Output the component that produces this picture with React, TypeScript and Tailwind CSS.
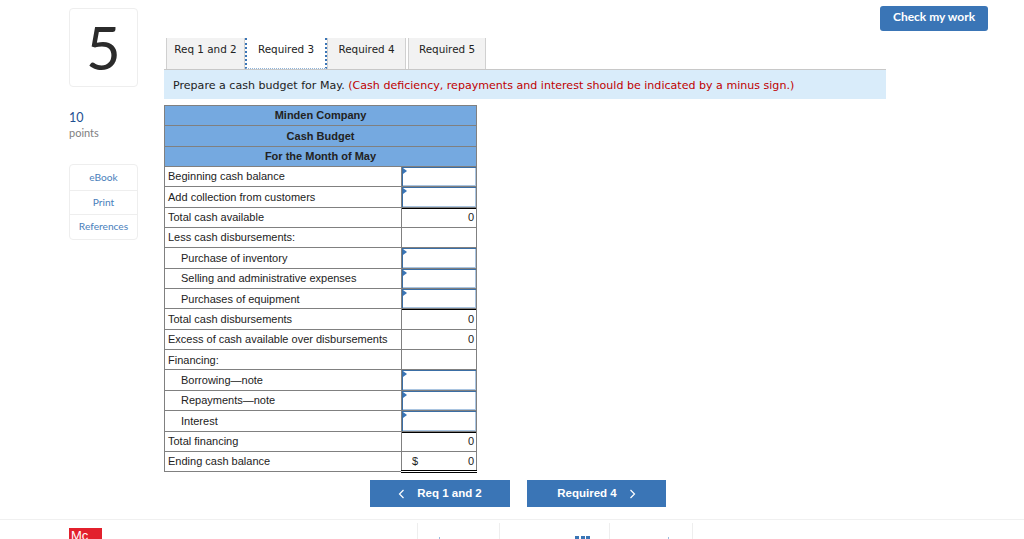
import React from "react";

const head = ["Minden Company", "Cash Budget", "For the Month of May"];

type Row = { label: string; indent?: boolean; kind: "input" | "value" | "blank" | "total"; value?: string; dollar?: boolean; strong?: boolean };

const rows: Row[] = [
  { label: "Beginning cash balance", kind: "input" },
  { label: "Add collection from customers", kind: "input" },
  { label: "Total cash available", kind: "value", value: "0", strong: true },
  { label: "Less cash disbursements:", kind: "blank" },
  { label: "Purchase of inventory", indent: true, kind: "input" },
  { label: "Selling and administrative expenses", indent: true, kind: "input" },
  { label: "Purchases of equipment", indent: true, kind: "input" },
  { label: "Total cash disbursements", kind: "value", value: "0", strong: true },
  { label: "Excess of cash available over disbursements", kind: "value", value: "0" },
  { label: "Financing:", kind: "blank" },
  { label: "Borrowing—note", indent: true, kind: "input" },
  { label: "Repayments—note", indent: true, kind: "input" },
  { label: "Interest", indent: true, kind: "input" },
  { label: "Total financing", kind: "value", value: "0", strong: true },
  { label: "Ending cash balance", kind: "total", value: "0", dollar: true },
];

function Tab({ label }: { label: string }) {
  return (
    <div className="flex h-full w-full items-center justify-center border-x border-[#d0d0d0] bg-[#f2f2f2] pb-[7px]">
      {label}
    </div>
  );
}

export default function App() {
  return (
    <div className="flex h-[539px] w-[1024px] flex-col overflow-hidden bg-white font-['Liberation_Sans',sans-serif]">
      <div className="flex h-[519px] pl-[69px]">
        <aside className="w-[69px] shrink-0 pt-[8px] font-['Lato',sans-serif]">
          <div className="flex h-[79px] items-center justify-center rounded border border-[#eeeeee] pb-[2px] text-[60px] leading-none font-normal text-[#2b2b2b]">
            5
          </div>
          <div className="mt-[23px] text-[12.5px] leading-[16px] text-[#1d4f91]">10</div>
          <div className="text-[11px] leading-[14px] text-[#808080]">points</div>
          <div className="mt-[24px] flex flex-col rounded border border-[#eeeeee] text-center text-[10.2px] text-[#4a80bb]">
            <div className="flex h-[26px] items-center justify-center border-b border-[#eeeeee]">eBook</div>
            <div className="flex h-[24px] items-center justify-center border-b border-[#eeeeee] pt-[1px]">Print</div>
            <div className="flex h-[24px] items-center justify-center">References</div>
          </div>
        </aside>

        <main className="ml-[26px] flex w-[824px] shrink-0 flex-col pt-[6px]">
          <button className="h-[25px] w-[108px] self-end rounded-[3px] bg-[#3a75b6] pb-[3px] font-['Lato',sans-serif] text-[12px] font-bold text-white">
            Check my work
          </button>

          <div className="mt-[7px] flex h-[31px] pl-[2px] font-['DejaVu_Sans',sans-serif] text-[10.4px] text-[#222222]">
            <div className="w-[79px]"><Tab label="Req 1 and 2" /></div>
            <div className="flex w-[82px] items-center justify-center border-x-2 border-b border-dotted border-x-[#3a75b6] border-b-[#8fb4da] bg-white pb-[7px]">
              Required 3
            </div>
            <div className="w-[79px]"><Tab label="Required 4" /></div>
            <div className="ml-[2px] w-[78px]"><Tab label="Required 5" /></div>
          </div>

          <div className="flex h-[30px] w-[722px] items-center border-t border-[#c8c8c8] bg-[#d9ecfa] pt-[3px] pl-[9px] font-['DejaVu_Sans',sans-serif] text-[11.07px] text-[#222222]">
            <span>Prepare a cash budget for May.&nbsp;</span>
            <span className="text-[#c00000]">(Cash deficiency, repayments and interest should be indicated by a minus sign.)</span>
          </div>

          <table className="mt-[6px] w-[312px] table-fixed border-collapse text-[11px] text-[#222222]">
            <colgroup>
              <col className="w-[237px]" />
              <col className="w-[75px]" />
            </colgroup>
            <thead>
              {head.map((h) => (
                <tr key={h} className="h-[20.35px]">
                  <th colSpan={2} className="border border-[#808080] bg-[#75a9e0] p-0 text-center font-bold">
                    {h}
                  </th>
                </tr>
              ))}
            </thead>
            <tbody>
              {rows.map((r) => (
                <tr key={r.label} className="h-[20.35px]">
                  <td className={`border border-[#808080] p-0 ${r.indent ? "pl-[16px]" : "pl-[3px]"}`}>{r.label}</td>
                  {r.kind === "input" ? (
                    <td className="relative border border-[#808080] bg-white p-0 shadow-[inset_1px_1px_0_#3a6ea5,inset_-1px_-1px_0_#a9c4e0]">
                      <span className="absolute top-[1px] left-[1px] h-0 w-0 border-y-[3px] border-l-[4px] border-y-transparent border-l-[#3a75b6]" />
                    </td>
                  ) : r.kind === "blank" ? (
                    <td className="border border-[#808080] p-0" />
                  ) : r.kind === "total" ? (
                    <td className="border border-b-[3px] border-[#808080] border-b-black border-double p-0 pr-[2px] text-right">
                      <div className="flex justify-between pl-[10px]">
                        <span>$</span>
                        <span>{r.value}</span>
                      </div>
                    </td>
                  ) : (
                    <td className={`border border-[#808080] p-0 pr-[2px] text-right ${r.strong ? "shadow-[inset_0_1px_0_#000000]" : ""}`}>{r.value}</td>
                  )}
                </tr>
              ))}
            </tbody>
          </table>

          <div className="mt-[7px] flex gap-[17px] pl-[206px] text-[11.5px] font-bold text-white">
            <div className="flex h-[27px] w-[140px] items-center justify-center gap-[12px] bg-[#3a75b6]">
              <svg width="7" height="10" viewBox="0 0 7 10" fill="none" stroke="white" strokeWidth="1.2"><path d="M5.5 1 1.5 5l4 4" /></svg>
              <span>Req 1 and 2</span>
            </div>
            <div className="flex h-[27px] w-[139px] items-center justify-center gap-[12px] bg-[#3a75b6]">
              <span>Required 4</span>
              <svg width="7" height="10" viewBox="0 0 7 10" fill="none" stroke="white" strokeWidth="1.2"><path d="M1.5 1 5.5 5l-4 4" /></svg>
            </div>
          </div>
        </main>
      </div>

      <footer className="flex h-[20px] items-start border-t border-[#f0f0f0]">
        <div className="mt-[8px] ml-[69px] h-[12px] w-[33px] bg-[#e2202c] pt-[1px] pl-[2px] text-[13px] leading-[14px] text-white">
          Mc
        </div>
        <div className="mt-[3px] ml-[315px] h-[17px] w-[83px] border-x border-[#eeeeee]">
          <div className="mt-[14px] ml-[21px] h-[2px] w-[1px] bg-[#9dbbdc]" />
        </div>
        <div className="mt-[3px] h-[17px] w-[110px] border-r border-[#eeeeee]">
          <div className="mt-[13px] ml-[75px] flex h-[3px] w-[15px] justify-between">
            <span className="w-[4px] bg-[#3a75b6]" />
            <span className="w-[4px] bg-[#3a75b6]" />
            <span className="w-[4px] bg-[#3a75b6]" />
          </div>
        </div>
        <div className="mt-[3px] h-[17px] w-[83px] border-r border-[#eeeeee]">
          <div className="mt-[14px] ml-[58px] h-[2px] w-[1px] bg-[#9dbbdc]" />
        </div>
      </footer>
    </div>
  );
}
